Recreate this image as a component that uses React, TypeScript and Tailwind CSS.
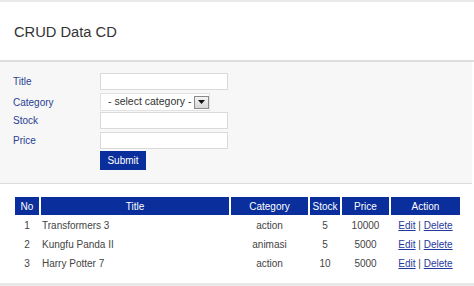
import React from "react";

const rows = [
  { no: 1, title: "Transformers 3", category: "action", stock: 5, price: 10000 },
  { no: 2, title: "Kungfu Panda II", category: "animasi", stock: 5, price: 5000 },
  { no: 3, title: "Harry Potter 7", category: "action", stock: 10, price: 5000 },
];

function Input() {
  return <div className="h-[17px] w-[128px] bg-white border border-[#dadada]" />;
}

export default function App() {
  return (
    <div
      className="w-[474px] h-[286px] bg-[#e9e9e9] pt-[2px] overflow-hidden text-[10px] text-[#444]"
      style={{ fontFamily: '"Liberation Sans", Arial, sans-serif' }}
    >
      <div className="bg-white">
        <div className="h-[60px] flex items-center pl-[14px] pt-[2px] text-[14.7px] text-[#333] border-b-2 border-[#dedede]">
          CRUD Data CD
        </div>
        <div className="mr-[2px] bg-[#f7f7f7] h-[122px] border-b border-[#dcdcdc] pt-[11px] pl-[13px]">
          <div className="flex items-center">
            <div className="w-[87px] text-[#2a3f93]">Title</div>
            <Input />
          </div>
          <div className="flex items-center mt-[3px]">
            <div className="w-[87px] text-[#2a3f93]">Category</div>
            <div className="h-[18px] w-[110px] bg-white border border-[#e2e2e2] flex items-center pl-[7px] text-[#333] text-[10.5px] whitespace-nowrap">
              <span>- select category -</span>
              <div className="ml-[3px] shrink-0 w-[15px] h-[13px] border border-[#8a8a8a] bg-gradient-to-b from-[#f4f4f4] to-[#d6d6d6] flex items-center justify-center">
                <svg width="7" height="4" viewBox="0 0 7 4">
                  <path d="M0 0H7L3.5 4Z" fill="#111" />
                </svg>
              </div>
            </div>
          </div>
          <div className="flex items-center mt-[1px]">
            <div className="w-[87px] text-[#2a3f93]">Stock</div>
            <Input />
          </div>
          <div className="flex items-center mt-[3px]">
            <div className="w-[87px] text-[#2a3f93]">Price</div>
            <Input />
          </div>
          <div className="flex mt-[2px]">
            <div className="w-[87px]" />
            <div className="h-[19px] w-[46px] bg-[#0a2f9c] text-white flex items-center justify-center">
              Submit
            </div>
          </div>
        </div>
        <div className="h-[99px] pt-[11px] pl-[13px]">
          <table className="border-separate border-spacing-[2px]">
            <thead>
              <tr className="h-[18px] bg-[#0a2f9c] text-white">
                <th className="w-[24px] font-normal p-0">No</th>
                <th className="w-[188px] font-normal p-0">Title</th>
                <th className="w-[77px] font-normal p-0">Category</th>
                <th className="w-[30px] font-normal p-0">Stock</th>
                <th className="w-[47px] font-normal p-0">Price</th>
                <th className="w-[69px] font-normal p-0">Action</th>
              </tr>
            </thead>
            <tbody>
              {rows.map((r) => (
                <tr key={r.no} className="h-[17px]">
                  <td className="text-center p-0">{r.no}</td>
                  <td className="p-0 pl-[1px]">{r.title}</td>
                  <td className="text-center p-0">{r.category}</td>
                  <td className="text-center p-0">{r.stock}</td>
                  <td className="text-center p-0">{r.price}</td>
                  <td className="text-center p-0">
                    <a className="underline text-[#1f3a9c]">Edit</a>
                    <span> | </span>
                    <a className="underline text-[#1f3a9c]">Delete</a>
                  </td>
                </tr>
              ))}
            </tbody>
          </table>
        </div>
      </div>
    </div>
  );
}
